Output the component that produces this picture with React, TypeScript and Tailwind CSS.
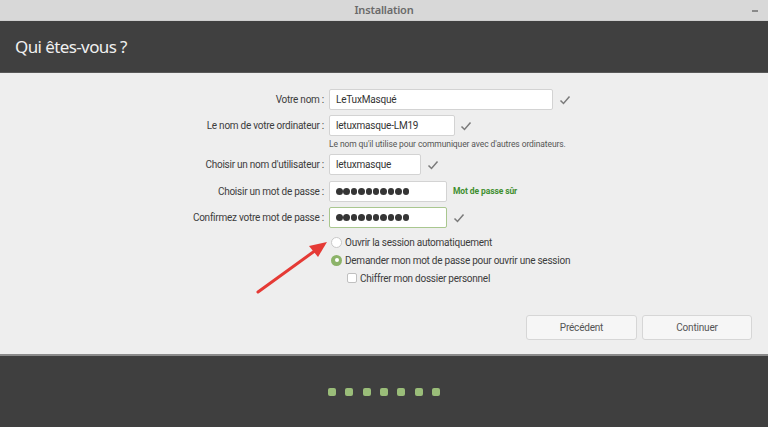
import React from "react";

const Check = () => (
  <svg width="12" height="10" viewBox="0 0 12 10" className="shrink-0">
    <polyline points="1.5,5.5 4.5,8.5 10.5,1.5" fill="none" stroke="#7a7a7a" strokeWidth="1.5" />
  </svg>
);

const Dots = () => (
  <div className="flex items-center gap-[0.9px]">
    {Array.from({ length: 10 }).map((_, i) => (
      <div key={i} className="w-[6.5px] h-[6.5px] rounded-full bg-[#353535]" />
    ))}
  </div>
);

function Row({
  label,
  width,
  children,
  after,
  mt,
  border = "border-[#d3d3d3]",
}: {
  label: string;
  width: string;
  children: React.ReactNode;
  after?: React.ReactNode;
  mt: string;
  border?: string;
}) {
  return (
    <div className={`flex items-center ${mt}`}>
      <div className="w-[329px] shrink-0 pr-[5px] text-right text-[10px] tracking-[-0.25px] text-[#3c3c3c]">{label}</div>
      <div
        className={`${width} h-[21px] bg-white border ${border} rounded-[2px] flex items-center pl-[6px] text-[10px] tracking-[-0.2px] text-[#333]`}
      >
        {children}
      </div>
      {after}
    </div>
  );
}

export default function App() {
  return (
    <div
      className="w-[768px] h-[427px] flex flex-col overflow-hidden bg-[#eeeeee] relative font-[Roboto,'Noto_Sans',sans-serif]"
    >
      {/* Title bar */}
      <div className="h-[21px] shrink-0 bg-[#d8d8d8] flex items-center justify-center relative border-b border-[#cfcfcf] font-['Noto_Sans',sans-serif]">
        <span className="text-[11px] font-semibold text-[#6a6a6a] tracking-[-0.2px]">Installation</span>
        <div className="absolute right-[10px] top-[10px] w-[6px] h-[2px] bg-[#8a8a8a]" />
      </div>
      {/* Header */}
      <div className="h-[52px] shrink-0 bg-[#404040] flex items-center pl-[15px] border-b border-[#595959] font-['Noto_Sans',sans-serif]">
        <span className="text-[17px] text-[#f0f0f0] tracking-[-0.6px]">Qui êtes-vous ?</span>
      </div>
      {/* Content */}
      <div className="flex-1 flex flex-col relative">
        <div className="flex flex-col pt-[16px]">
          <Row label="Votre nom :" width="w-[224px]" mt="mt-0" after={<div className="ml-[6px]"><Check /></div>}>
            LeTuxMasqué
          </Row>
          <Row label="Le nom de votre ordinateur :" width="w-[126px]" mt="mt-[5px]" after={<div className="ml-[5px]"><Check /></div>}>
            letuxmasque-LM19
          </Row>
          <div className="pl-[329px] mt-[2px] text-[8.5px] tracking-[-0.1px] text-[#555] leading-[12px]">
            Le nom qu'il utilise pour communiquer avec d'autres ordinateurs.
          </div>
          <Row label="Choisir un nom d'utilisateur :" width="w-[92px]" mt="mt-[4px]" after={<div className="ml-[6px]"><Check /></div>}>
            letuxmasque
          </Row>
          <Row
            label="Choisir un mot de passe :"
            width="w-[118px]"
            mt="mt-[6px]"
            after={<span className="ml-[6px] text-[8.5px] tracking-[-0.1px] font-bold text-[#3e8e2f]">Mot de passe sûr</span>}
          >
            <Dots />
          </Row>
          <Row
            label="Confirmez votre mot de passe :"
            width="w-[118px]"
            mt="mt-[5px]"
            border="border-[#a9c78f]"
            after={<div className="ml-[6px]"><Check /></div>}
          >
            <Dots />
          </Row>
          <div className="pl-[331px] mt-[7px] flex items-center h-[14px]">
            <div className="w-[11px] h-[11px] rounded-full bg-white border border-[#c8c8c8]" />
            <span className="ml-[3px] text-[10px] tracking-[-0.25px] text-[#3c3c3c]">Ouvrir la session automatiquement</span>
          </div>
          <div className="pl-[331px] mt-[4px] flex items-center h-[14px]">
            <div className="w-[11px] h-[11px] rounded-full bg-[#8cb369] flex items-center justify-center">
              <div className="w-[4px] h-[4px] rounded-full bg-white" />
            </div>
            <span className="ml-[3px] text-[10px] tracking-[-0.25px] text-[#3c3c3c]">Demander mon mot de passe pour ouvrir une session</span>
          </div>
          <div className="pl-[347px] mt-[4px] flex items-center h-[14px]">
            <div className="w-[10px] h-[10px] rounded-[2px] bg-white border border-[#c0c0c0]" />
            <span className="ml-[3px] text-[10px] tracking-[-0.25px] text-[#3c3c3c]">Chiffrer mon dossier personnel</span>
          </div>
        </div>
        <div className="mt-auto mb-[14px] flex justify-end gap-[5px] pr-[16px]">
          <button className="w-[111px] h-[25px] bg-[#f6f6f6] border border-[#d6d6d6] rounded-[3px] text-[10px] tracking-[-0.2px] text-[#555]">
            Précédent
          </button>
          <button className="w-[110px] h-[25px] bg-[#f6f6f6] border border-[#d6d6d6] rounded-[3px] text-[10px] tracking-[-0.2px] text-[#555]">
            Continuer
          </button>
        </div>
        {/* Red arrow annotation */}
        <svg className="absolute left-0 top-0 pointer-events-none" width="768" height="281">
          <line x1="258" y1="219" x2="316" y2="177" stroke="#e53a35" strokeWidth="3" strokeLinecap="round" />
          <polygon points="327,169 309,173 318,184" fill="#e53a35" />
        </svg>
      </div>
      {/* Footer */}
      <div className="h-[73px] shrink-0 bg-[#3f3f3f] border-t-2 border-[#8a8a8a] flex items-center justify-center gap-[9.3px]">
        {Array.from({ length: 7 }).map((_, i) => (
          <div key={i} className="w-[8px] h-[8px] rounded-[2px] bg-[#9abd79]" />
        ))}
      </div>
    </div>
  );
}
